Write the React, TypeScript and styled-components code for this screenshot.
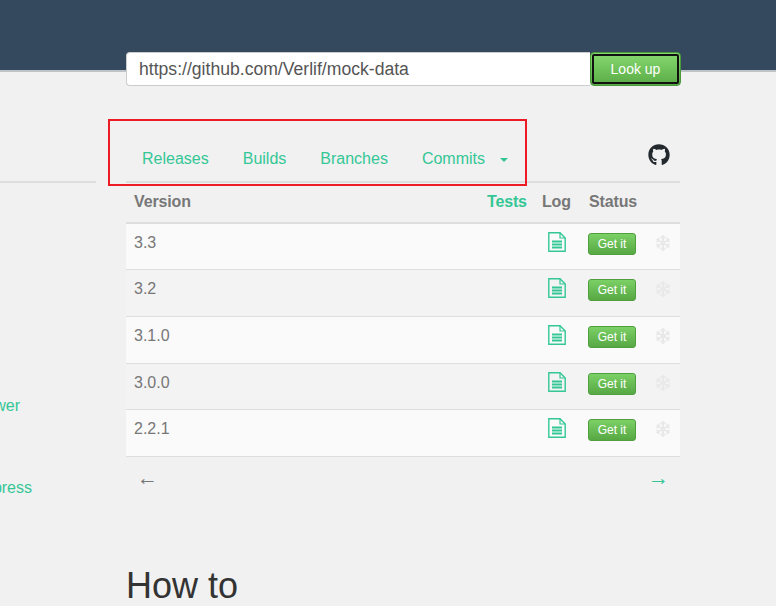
import React from "react";
import styled, { createGlobalStyle } from "styled-components";
import { FaGithub, FaSnowflake } from "react-icons/fa";

const green = "#34c796";
const versions = ["3.3", "3.2", "3.1.0", "3.0.0", "2.2.1"];

const FileIcon = () => (
  <svg width="18" height="20" viewBox="0 0 18 20" fill="none">
    <path d="M0.8 0.8H12L17.2 6V19.2H0.8Z" stroke={green} strokeWidth="1.4" fill="none" />
    <path d="M12 0.8V6H17.2" stroke={green} strokeWidth="1.2" fill="none" />
    <path d="M4 9.5H14M4 12.5H14M4 15.5H14" stroke={green} strokeWidth="1.8" />
  </svg>
);

const App: React.FC = () => {
  return (
    <Page>
      <GlobalStyle />
      <Header />
      <Layout>
        <Sidebar>
          <SideRule />
          <SideLink $top={214} $end={20}>Bower</SideLink>
          <SideLink $top={64} $end={32}>Wordpress</SideLink>
        </Sidebar>
        <Main>
          <SearchForm>
            <SearchInput readOnly value="https://github.com/Verlif/mock-data" />
            <LookUp>Look up</LookUp>
          </SearchForm>
          <Tabs>
            <Tab>Releases</Tab>
            <Tab>Builds</Tab>
            <Tab>Branches</Tab>
            <Tab>Commits</Tab>
            <Caret />
            <GithubLink>
              <FaGithub size={22} color="#24292e" />
            </GithubLink>
          </Tabs>
          <HeadRow>
            <HeadCell>Version</HeadCell>
            <TestsCell>Tests</TestsCell>
            <HeadCell>Log</HeadCell>
            <StatusCell>Status</StatusCell>
            <span />
          </HeadRow>
          {versions.map((version, i) => (
            <Row key={version} $odd={i % 2 === 0}>
              <VersionCell>{version}</VersionCell>
              <span />
              <LogCell>
                <FileIcon />
              </LogCell>
              <span>
                <GetIt>Get it</GetIt>
              </span>
              <Flake>
                <FaSnowflake size={16} color="#e9e9e9" />
              </Flake>
            </Row>
          ))}
          <Pager>
            <Arrow>←</Arrow>
            <Arrow $active>→</Arrow>
          </Pager>
          <Title>How to</Title>
        </Main>
      </Layout>
      <Annotation />
    </Page>
  );
};

export default App;

// styled

const GlobalStyle = createGlobalStyle`
  html, body {
    margin: 0;
    height: 100%;
    overflow: hidden;
    background: #f1f1f1;
  }
  body {
    font-family: "Liberation Sans", Arial, sans-serif;
  }
`;

const Page = styled.div`
  position: relative;
  height: 606px;
  overflow: hidden;
  background: #f1f1f1;
`;

const Header = styled.div`
  height: 70px;
  background: #34495e;
  border-bottom: 2px solid #bdc3c7;
`;

const Layout = styled.div`
  display: grid;
  grid-template-columns: 96px 554px;
  column-gap: 30px;
`;

const Sidebar = styled.div`
  overflow: hidden;
  padding-top: 109px;
`;

const SideRule = styled.div`
  height: 2px;
  background: #dedede;
`;

const SideLink = styled.div<{ $top: number; $end: number }>`
  width: 120px;
  margin-top: ${(props) => props.$top}px;
  margin-left: ${(props) => props.$end - 120}px;
  text-align: right;
  font-size: 16px;
  line-height: 18px;
  color: ${green};
`;

const Main = styled.div`
  margin-top: -20px;
`;

const SearchForm = styled.div`
  display: flex;
  height: 34px;
`;

const SearchInput = styled.input`
  flex: 1;
  min-width: 0;
  box-sizing: border-box;
  height: 34px;
  padding: 0 12px;
  border: 1px solid #ccc;
  border-right: 0;
  border-radius: 4px 0 0 4px;
  outline: none;
  background: #fff;
  font-family: inherit;
  font-size: 17.6px;
  color: #555;
`;

const LookUp = styled.button`
  box-sizing: border-box;
  width: 91px;
  height: 34px;
  margin-right: -1px;
  border: 1px solid #4a9a3c;
  border-radius: 4px;
  outline: 2px solid #111;
  outline-offset: -4px;
  background: linear-gradient(#86d96f, #5aab46);
  color: #fff;
  font-family: inherit;
  font-size: 14px;
`;

const Tabs = styled.div`
  display: flex;
  align-items: flex-start;
  box-sizing: border-box;
  height: 63px;
  margin-top: 34px;
  padding: 30px 0 0 16px;
  border-bottom: 2px solid #dedede;
`;

const Tab = styled.div`
  margin-right: 34px;
  font-size: 16px;
  line-height: 18px;
  color: ${green};

  &:nth-child(4) {
    margin-right: 15px;
  }
`;

const Caret = styled.div`
  width: 0;
  height: 0;
  margin-top: 8px;
  border-left: 4px solid transparent;
  border-right: 4px solid transparent;
  border-top: 4px solid ${green};
`;

const GithubLink = styled.div`
  display: flex;
  margin: -6px 10px 0 auto;
`;

const HeadRow = styled.div`
  display: grid;
  grid-template-columns: 1fr 55px 46px 66px 26px;
  align-items: center;
  box-sizing: border-box;
  height: 40.8px;
  padding: 0 0 0 8px;
  border-bottom: 2px solid #dedede;
`;

const HeadCell = styled.div`
  font-size: 16px;
  font-weight: bold;
  letter-spacing: -0.15px;
  color: #777;
`;

const TestsCell = styled(HeadCell)`
  color: ${green};
`;

const StatusCell = styled(HeadCell)`
  padding-left: 1px;
`;

const Row = styled.div<{ $odd: boolean }>`
  display: grid;
  grid-template-columns: 1fr 55px 46px 66px 26px;
  box-sizing: border-box;
  height: 46.6px;
  padding: 8px 0 0 8px;
  border-bottom: 1px solid #dedede;
  background: ${(props) => (props.$odd ? "#fafafa" : "#f3f3f3")};
`;

const VersionCell = styled.div`
  font-size: 16px;
  line-height: 22px;
  color: #777;
`;

const LogCell = styled.div`
  padding-left: 6px;
`;

const GetIt = styled.button`
  display: block;
  box-sizing: border-box;
  width: 48px;
  height: 22px;
  padding: 0;
  margin-top: 1px;
  border: 1px solid #4f9f3e;
  border-radius: 3px;
  background: linear-gradient(#7bd066, #57a843);
  color: #fff;
  font-family: inherit;
  font-size: 12px;
`;

const Flake = styled.div`
  display: flex;
  align-items: flex-start;
  padding: 3px 0 0 1px;
`;

const Pager = styled.div`
  display: flex;
  justify-content: space-between;
  height: 50px;
  padding: 8px 11px 0 11px;
`;

const Arrow = styled.div<{ $active?: boolean }>`
  font-family: "Liberation Serif", serif;
  font-size: 21px;
  line-height: 26px;
  color: ${(props) => (props.$active ? green : "#777")};
`;

const Title = styled.h1`
  margin: 51px 0 0;
  font-size: 36px;
  font-weight: 500;
  line-height: 40px;
  color: #333;
`;

const Annotation = styled.div`
  position: absolute;
  left: 108px;
  top: 119px;
  width: 415px;
  height: 63px;
  border: 2px solid #ed1c24;
`;
